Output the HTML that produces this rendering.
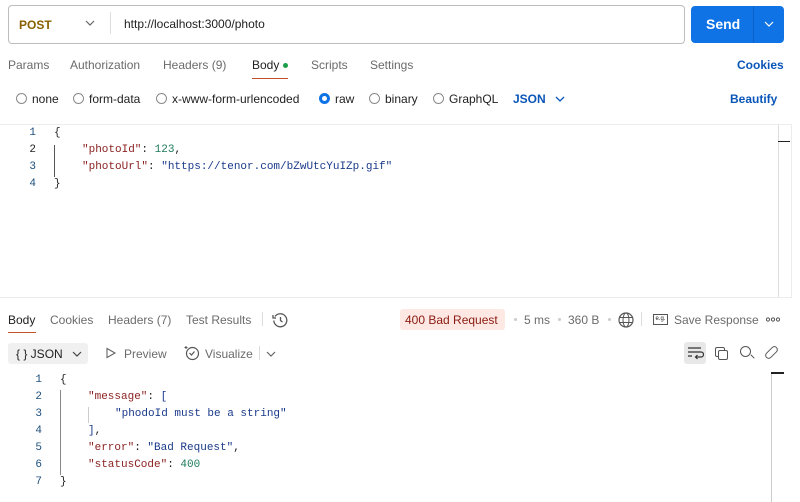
<!DOCTYPE html>
<html><head><style>
*{margin:0;padding:0;box-sizing:border-box}
body{width:800px;height:502px;background:#fff;font-family:"Liberation Sans",sans-serif;font-size:12px;color:#212121;position:relative;overflow:hidden}
.a{position:absolute;white-space:nowrap}
.g{color:#6b6b6b}
.m{font-family:"Liberation Mono",monospace;font-size:11px}
.ln{color:#1d4f7c;width:20px;text-align:right}
.k{color:#8a1f1f}.s{color:#1a3a8a}.n{color:#1d7a5a}
.r{width:11px;height:11px;border:1px solid #8a8a8a;border-radius:50%}
.b{color:#0a56b8;font-weight:bold}
</style></head><body>
<div class="a" style="left:8px;top:5px;width:677px;height:39px;border:1px solid #bdbdbd;border-radius:4px"></div>
<div class="a" style="left:19px;top:18px;color:#8a6100;font-weight:bold;font-size:12px">POST</div>
<svg class="a" style="left:85px;top:20px" width="10" height="6"><path d="M1 1l4 4 4-4" fill="none" stroke="#666" stroke-width="1.2"/></svg>
<div class="a" style="left:110px;top:12px;width:1px;height:22px;background:#ddd"></div>
<div class="a" style="left:124px;top:17px">http://localhost:3000/photo</div>
<div class="a" style="left:691px;top:6px;width:93px;height:37px;background:#0f73e6;border-radius:4px"></div>
<div class="a" style="left:753px;top:6px;width:1px;height:37px;background:#0b62c8"></div>
<div class="a" style="left:706px;top:16px;color:#fff;font-weight:bold;font-size:14px">Send</div>
<svg class="a" style="left:764px;top:21px" width="10" height="6"><path d="M1 1l4 4 4-4" fill="none" stroke="#fff" stroke-width="1.2"/></svg>

<div class="a g" style="left:8px;top:58px">Params</div>
<div class="a g" style="left:70px;top:58px">Authorization</div>
<div class="a g" style="left:163px;top:58px">Headers (9)</div>
<div class="a" style="left:252px;top:58px">Body</div>
<div class="a" style="left:283px;top:63px;width:5px;height:5px;border-radius:50%;background:#1a9e4a"></div>
<div class="a" style="left:252px;top:78px;width:36px;height:1px;background:#c2502a"></div>
<div class="a g" style="left:311px;top:58px">Scripts</div>
<div class="a g" style="left:370px;top:58px">Settings</div>
<div class="a b" style="left:737px;top:58px">Cookies</div>

<div class="a r" style="left:16px;top:93px"></div><div class="a" style="left:32px;top:92px">none</div>
<div class="a r" style="left:73px;top:93px"></div><div class="a" style="left:89px;top:92px">form-data</div>
<div class="a r" style="left:156px;top:93px"></div><div class="a" style="left:172px;top:92px">x-www-form-urlencoded</div>
<div class="a r" style="left:319px;top:93px;border:3px solid #0f73e6"></div><div class="a" style="left:335px;top:92px">raw</div>
<div class="a r" style="left:369px;top:93px"></div><div class="a" style="left:385px;top:92px">binary</div>
<div class="a r" style="left:433px;top:93px"></div><div class="a" style="left:449px;top:92px">GraphQL</div>
<div class="a b" style="left:513px;top:92px">JSON</div>
<svg class="a" style="left:555px;top:96px" width="10" height="6"><path d="M1 1l4 4 4-4" fill="none" stroke="#0a56b8" stroke-width="1.3"/></svg>
<div class="a b" style="left:730px;top:92px">Beautify</div>

<div class="a" style="left:0;top:124px;width:792px;height:174px;border:1px solid #ececec;border-left:none"></div>
<div class="a" style="left:778px;top:125px;width:1px;height:172px;background:#ddd"></div>
<div class="a" style="left:778px;top:141px;width:12px;height:1px;background:#222"></div>
<div class="a" style="left:54px;top:145px;width:1px;height:32px;background:#555"></div>
<div class="a m ln" style="left:16px;top:127px">1</div><div class="a m" style="left:54px;top:127px">{</div>
<div class="a m ln" style="left:16px;top:144px;color:#222">2</div><div class="a m" style="left:82px;top:144px"><span class="k">"photoId"</span>: <span class="n">123</span>,</div>
<div class="a m ln" style="left:16px;top:161px">3</div><div class="a m" style="left:82px;top:161px"><span class="k">"photoUrl"</span>: <span class="s">"https://tenor.com/bZwUtcYuIZp.gif"</span></div>
<div class="a m ln" style="left:16px;top:178px">4</div><div class="a m" style="left:54px;top:178px">}</div>

<div class="a" style="left:8px;top:313px">Body</div>
<div class="a" style="left:8px;top:332px;width:28px;height:1px;background:#c2502a"></div>
<div class="a g" style="left:50px;top:313px">Cookies</div>
<div class="a g" style="left:108px;top:313px">Headers (7)</div>
<div class="a g" style="left:186px;top:313px">Test Results</div>
<div class="a" style="left:262px;top:312px;width:1px;height:14px;background:#ddd"></div>
<svg class="a" style="left:272px;top:312px" width="16" height="16"><path d="M3 4.5A6.5 6.5 0 1 1 1.8 8.5" fill="none" stroke="#555" stroke-width="1.3"/><path d="M1 3v3h3" fill="none" stroke="#555" stroke-width="1.3"/><path d="M8.5 5v3.5l2 1.5" fill="none" stroke="#555" stroke-width="1.3"/></svg>
<div class="a" style="left:400px;top:309px;width:105px;height:21px;background:#fde8e4;border-radius:3px"></div>
<div class="a" style="left:405px;top:313px;color:#8a1a10">400 Bad Request</div>
<div class="a" style="left:514px;top:318px;width:3px;height:3px;border-radius:50%;background:#ccc"></div>
<div class="a g" style="left:524px;top:313px">5 ms</div>
<div class="a" style="left:558px;top:318px;width:3px;height:3px;border-radius:50%;background:#ccc"></div>
<div class="a g" style="left:568px;top:313px">360 B</div>
<div class="a" style="left:608px;top:318px;width:3px;height:3px;border-radius:50%;background:#ccc"></div>
<svg class="a" style="left:618px;top:312px" width="16" height="16"><circle cx="8" cy="8" r="7" fill="none" stroke="#555" stroke-width="1.2"/><ellipse cx="8" cy="8" rx="3" ry="7" fill="none" stroke="#555" stroke-width="1"/><path d="M1.5 5.5h13M1.5 10.5h13" stroke="#555" stroke-width="1"/></svg>
<div class="a" style="left:641px;top:312px;width:1px;height:14px;background:#ddd"></div>
<div class="a" style="left:653px;top:314px;width:15px;height:11px;border:1px solid #555;font-size:6px;text-align:center;line-height:9px">e.g.</div>
<div class="a g" style="left:674px;top:313px">Save Response</div>
<svg class="a" style="left:766px;top:317px" width="14" height="5"><circle cx="2" cy="2.5" r="1.6" fill="none" stroke="#555"/><circle cx="7" cy="2.5" r="1.6" fill="none" stroke="#555"/><circle cx="12" cy="2.5" r="1.6" fill="none" stroke="#555"/></svg>

<div class="a" style="left:8px;top:343px;width:80px;height:21px;background:#f0f0f0;border-radius:3px"></div>
<div class="a" style="left:16px;top:347px">{ } JSON</div>
<svg class="a" style="left:72px;top:351px" width="10" height="6"><path d="M1 1l4 4 4-4" fill="none" stroke="#444" stroke-width="1.2"/></svg>
<svg class="a" style="left:105px;top:347px" width="12" height="12"><path d="M2 1.5v9l8-4.5z" fill="none" stroke="#666" stroke-width="1.1"/></svg>
<div class="a g" style="left:124px;top:347px">Preview</div>
<svg class="a" style="left:184px;top:345px" width="16" height="16"><circle cx="8.5" cy="8.5" r="6" fill="none" stroke="#555" stroke-width="1.2"/><path d="M5.5 8l2 2 3-3.5" fill="none" stroke="#555" stroke-width="1.2"/><path d="M2 1v3M0.5 2.5h3" stroke="#555"/></svg>
<div class="a g" style="left:205px;top:347px">Visualize</div>
<div class="a" style="left:259px;top:346px;width:1px;height:14px;background:#ddd"></div>
<svg class="a" style="left:266px;top:351px" width="10" height="6"><path d="M1 1l4 4 4-4" fill="none" stroke="#666" stroke-width="1.2"/></svg>
<div class="a" style="left:684px;top:342px;width:22px;height:22px;background:#e8e8e8;border-radius:3px"></div>
<svg class="a" style="left:686px;top:345px" width="18" height="16"><path d="M2 3h13M2 7h13a2.5 2.5 0 0 1 0 5h-5M2 11h4" fill="none" stroke="#333" stroke-width="1.2"/><path d="M11.5 10l-2 2 2 2" fill="none" stroke="#333" stroke-width="1.2"/></svg>
<div class="a" style="left:715px;top:347px;width:10px;height:10px;border:1.2px solid #555;border-radius:2px"></div>
<div class="a" style="left:718px;top:350px;width:10px;height:10px;border:1.2px solid #555;border-radius:2px;background:#fff"></div>
<div class="a" style="left:740px;top:346px;width:11px;height:11px;border:1.3px solid #555;border-radius:50%"></div>
<div class="a" style="left:750px;top:356px;width:5px;height:1.3px;background:#555;transform:rotate(45deg)"></div>
<div class="a" style="left:768px;top:345px;width:7px;height:15px;border:1.2px solid #555;border-radius:4px;transform:rotate(45deg)"></div>

<div class="a" style="left:771px;top:373px;width:1px;height:129px;background:#ccc"></div>
<div class="a" style="left:771px;top:372px;width:13px;height:1.5px;background:#222"></div>
<div class="a" style="left:60px;top:390px;width:1px;height:85px;background:#888"></div>
<div class="a" style="left:88px;top:407px;width:1px;height:16px;background:#ccc"></div>
<div class="a m ln" style="left:22px;top:374px">1</div><div class="a m" style="left:60px;top:374px">{</div>
<div class="a m ln" style="left:22px;top:391px">2</div><div class="a m" style="left:88px;top:391px"><span class="k">"message"</span>: <span class="s">[</span></div>
<div class="a m ln" style="left:22px;top:408px">3</div><div class="a m s" style="left:115px;top:408px">"phodoId must be a string"</div>
<div class="a m ln" style="left:22px;top:425px">4</div><div class="a m" style="left:88px;top:425px"><span class="s">]</span>,</div>
<div class="a m ln" style="left:22px;top:442px">5</div><div class="a m" style="left:88px;top:442px"><span class="k">"error"</span>: <span class="s">"Bad Request"</span>,</div>
<div class="a m ln" style="left:22px;top:459px">6</div><div class="a m" style="left:88px;top:459px"><span class="k">"statusCode"</span>: <span class="n">400</span></div>
<div class="a m ln" style="left:22px;top:476px">7</div><div class="a m" style="left:60px;top:476px">}</div>
</body></html>
